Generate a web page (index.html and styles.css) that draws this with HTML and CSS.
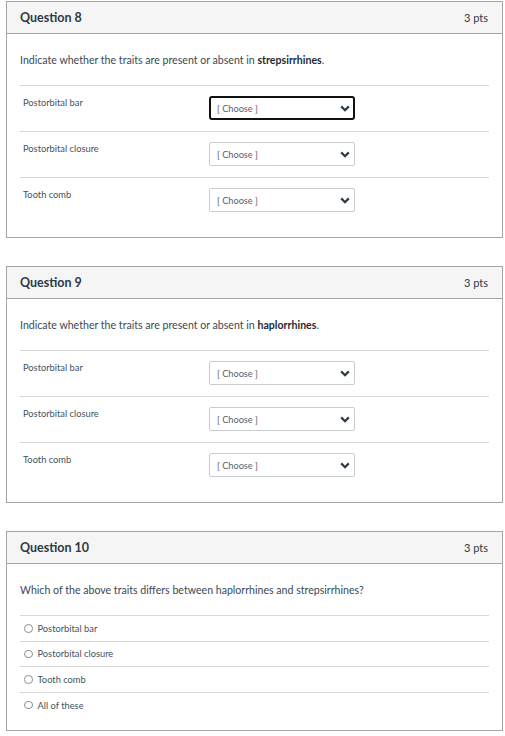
FILE: index.html
```html
<!DOCTYPE html>
<html>
<head>
<meta charset="utf-8">
<link rel="stylesheet" href="styles.css">
</head>
<body>
<div class="page">

  <section class="card">
    <header class="card-head">
      <span class="q-title">Question 8</span>
      <span class="q-pts">3 pts</span>
    </header>
    <div class="card-body matching">
      <p class="q-text">Indicate whether the traits are present or absent in <strong>strepsirrhines</strong>.</p>
      <div class="match-row">
        <span class="match-label">Postorbital bar</span>
        <div class="select focused"><span>[ Choose ]</span><svg class="chev" width="10" height="7" viewBox="0 0 10 7"><path d="M1.2 1.4 L5 5.2 L8.8 1.4" fill="none" stroke="#2d3b45" stroke-width="2.2"/></svg></div>
      </div>
      <div class="match-row">
        <span class="match-label">Postorbital closure</span>
        <div class="select"><span>[ Choose ]</span><svg class="chev" width="10" height="7" viewBox="0 0 10 7"><path d="M1.2 1.4 L5 5.2 L8.8 1.4" fill="none" stroke="#2d3b45" stroke-width="2.2"/></svg></div>
      </div>
      <div class="match-row">
        <span class="match-label">Tooth comb</span>
        <div class="select"><span>[ Choose ]</span><svg class="chev" width="10" height="7" viewBox="0 0 10 7"><path d="M1.2 1.4 L5 5.2 L8.8 1.4" fill="none" stroke="#2d3b45" stroke-width="2.2"/></svg></div>
      </div>
    </div>
  </section>

  <section class="card">
    <header class="card-head">
      <span class="q-title">Question 9</span>
      <span class="q-pts">3 pts</span>
    </header>
    <div class="card-body matching">
      <p class="q-text">Indicate whether the traits are present or absent in <strong>haplorrhines</strong>.</p>
      <div class="match-row">
        <span class="match-label">Postorbital bar</span>
        <div class="select"><span>[ Choose ]</span><svg class="chev" width="10" height="7" viewBox="0 0 10 7"><path d="M1.2 1.4 L5 5.2 L8.8 1.4" fill="none" stroke="#2d3b45" stroke-width="2.2"/></svg></div>
      </div>
      <div class="match-row">
        <span class="match-label">Postorbital closure</span>
        <div class="select"><span>[ Choose ]</span><svg class="chev" width="10" height="7" viewBox="0 0 10 7"><path d="M1.2 1.4 L5 5.2 L8.8 1.4" fill="none" stroke="#2d3b45" stroke-width="2.2"/></svg></div>
      </div>
      <div class="match-row">
        <span class="match-label">Tooth comb</span>
        <div class="select"><span>[ Choose ]</span><svg class="chev" width="10" height="7" viewBox="0 0 10 7"><path d="M1.2 1.4 L5 5.2 L8.8 1.4" fill="none" stroke="#2d3b45" stroke-width="2.2"/></svg></div>
      </div>
    </div>
  </section>

  <section class="card">
    <header class="card-head">
      <span class="q-title">Question 10</span>
      <span class="q-pts">3 pts</span>
    </header>
    <div class="card-body">
      <p class="q-text">Which of the above traits differs between haplorrhines and strepsirrhines?</p>
      <div class="option"><span class="radio"></span><span class="opt-label">Postorbital bar</span></div>
      <div class="option"><span class="radio"></span><span class="opt-label">Postorbital closure</span></div>
      <div class="option"><span class="radio"></span><span class="opt-label">Tooth comb</span></div>
      <div class="option"><span class="radio"></span><span class="opt-label">All of these</span></div>
    </div>
  </section>

</div>
</body>
</html>
```

FILE: styles.css
```css
* { box-sizing: border-box; }

body {
  margin: 0;
  background: #fff;
  font-family: Lato, "Liberation Sans", sans-serif;
  color: #2d3b45;
}

.page {
  padding: 1px 2px 0 6px;
  display: flex;
  flex-direction: column;
  gap: 28px;
}

.card {
  border: 1px solid #a5a5a5;
  background: #fff;
}

.card-head {
  height: 32px;
  background: #f5f5f5;
  border-bottom: 1px solid #a5a5a5;
  display: flex;
  align-items: center;
  justify-content: space-between;
  padding: 0 14px 0 13px;
}

.q-title {
  font-weight: 700;
  font-size: 12.5px;
  color: #2d3b45;
}

.q-pts {
  font-size: 11px;
  color: #2d3b45;
}

.card-body {
  padding: 20px 13px 13px 13px;
}

.card-body.matching {
  padding-bottom: 14px;
}

.q-text {
  margin: 0 0 18px 0;
  font-size: 10.6px;
  line-height: 13px;
  color: #3a4853;
}

.q-text strong {
  font-weight: 700;
  color: #1f2a33;
}

.match-row {
  border-top: 1px solid #d7d7d7;
  display: flex;
  align-items: flex-start;
  padding: 10px 0 11px 3px;
}

.match-label {
  width: 186px;
  font-size: 9.3px;
  line-height: 12px;
  margin-top: 1px;
  color: #44525c;
}

.select {
  width: 146px;
  height: 24px;
  border: 1px solid #c7cdd1;
  border-radius: 2px;
  display: flex;
  align-items: center;
  justify-content: space-between;
  padding: 0 4px 0 7px;
  font-size: 9.2px;
  color: #56616a;
  background: #fff;
}

.select.focused {
  border: 2px solid #111;
  border-radius: 3px;
  padding-left: 6px;
  padding-right: 3px;
}

.chev { display: block; }

.option {
  border-top: 1px solid #d7d7d7;
  display: flex;
  align-items: center;
  height: 25.6px;
  padding-left: 4px;
  gap: 5px;
}

.radio {
  width: 8.5px;
  height: 8.5px;
  border: 1px solid #8a8f94;
  border-radius: 50%;
  background: #fff;
}

.opt-label {
  font-size: 9.3px;
  color: #44525c;
}
```
